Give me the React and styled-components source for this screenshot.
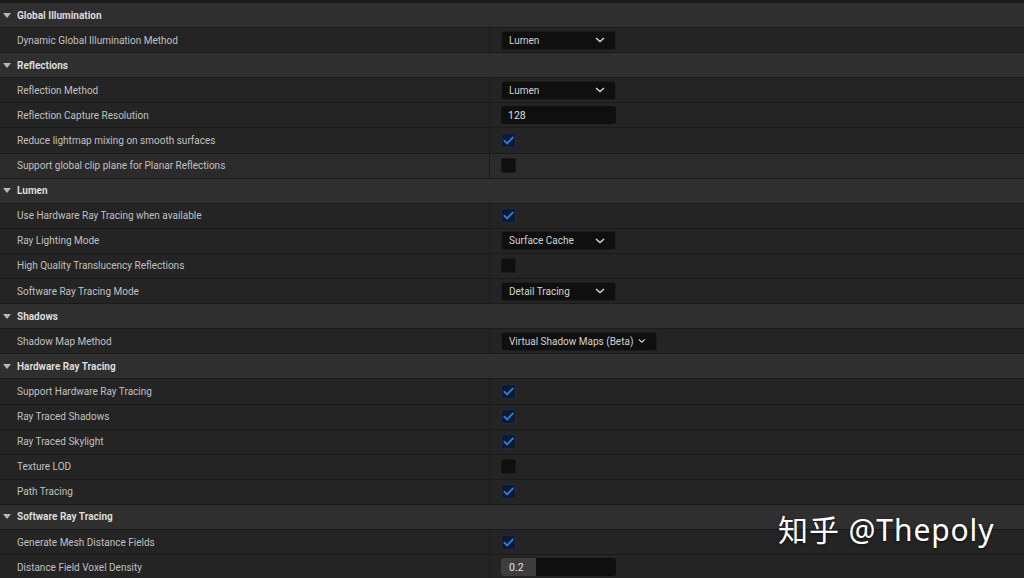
import React from "react";
import styled, { createGlobalStyle } from "styled-components";

const GlobalStyle = createGlobalStyle`
  html, body {
    margin: 0;
    padding: 0;
    background: #1a1a1a;
    overflow: hidden;
  }
  body {
    font-family: Roboto, "Noto Sans", "Liberation Sans", sans-serif;
  }
`;

const sections = [
  {
    title: "Global Illumination",
    rows: [{ label: "Dynamic Global Illumination Method", type: "select", value: "Lumen" }],
  },
  {
    title: "Reflections",
    rows: [
      { label: "Reflection Method", type: "select", value: "Lumen" },
      { label: "Reflection Capture Resolution", type: "text", value: "128" },
      { label: "Reduce lightmap mixing on smooth surfaces", type: "check", value: true },
      { label: "Support global clip plane for Planar Reflections", type: "check", value: false, hover: true },
    ],
  },
  {
    title: "Lumen",
    rows: [
      { label: "Use Hardware Ray Tracing when available", type: "check", value: true },
      { label: "Ray Lighting Mode", type: "select", value: "Surface Cache" },
      { label: "High Quality Translucency Reflections", type: "check", value: false },
      { label: "Software Ray Tracing Mode", type: "select", value: "Detail Tracing" },
    ],
  },
  {
    title: "Shadows",
    rows: [{ label: "Shadow Map Method", type: "select", value: "Virtual Shadow Maps (Beta)", wide: true }],
  },
  {
    title: "Hardware Ray Tracing",
    rows: [
      { label: "Support Hardware Ray Tracing", type: "check", value: true },
      { label: "Ray Traced Shadows", type: "check", value: true },
      { label: "Ray Traced Skylight", type: "check", value: true },
      { label: "Texture LOD", type: "check", value: false },
      { label: "Path Tracing", type: "check", value: true },
    ],
  },
  {
    title: "Software Ray Tracing",
    rows: [
      { label: "Generate Mesh Distance Fields", type: "check", value: true },
      { label: "Distance Field Voxel Density", type: "slider", value: "0.2", fill: 0.3 },
    ],
  },
];

const Panel = styled.div`
  position: relative;
  width: 1024px;
  height: 578px;
  padding-top: 3px;
  box-sizing: border-box;
  background: #1a1a1a;
  display: flex;
  flex-direction: column;
  gap: 1px;
  overflow: hidden;
`;

const Header = styled.div`
  height: 24.1px;
  background: #2f2f2f;
  display: flex;
  align-items: center;
  color: #dcdcdc;
  font-size: 10px;
  font-weight: 700;
  flex-shrink: 0;
`;

const Arrow = styled.span`
  width: 0;
  height: 0;
  margin: 0 6px 0 3px;
  border-left: 4px solid transparent;
  border-right: 4px solid transparent;
  border-top: 5px solid #b8b8b8;
`;

const Row = styled.div`
  height: 24.1px;
  background: ${(p) => (p.$hover ? "#2b2b2b" : "#242424")};
  display: grid;
  grid-template-columns: 489px 1px 1fr;
  flex-shrink: 0;
`;

const Label = styled.div`
  display: flex;
  align-items: center;
  padding-left: 17px;
  color: #c0c0c0;
  font-size: 10px;
`;

const Divider = styled.div`
  background: #1c1c1c;
`;

const Value = styled.div`
  display: flex;
  align-items: center;
  padding-left: 11px;
`;

const Select = styled.div`
  width: ${(p) => (p.$wide ? "156px" : "115px")};
  height: 19px;
  box-sizing: border-box;
  background: #0f0f0f;
  border: 1px solid #1c1c1c;
  border-radius: 3px;
  display: flex;
  align-items: center;
  justify-content: ${(p) => (p.$wide ? "flex-start" : "space-between")};
  gap: 5px;
  padding: 0 10px 0 7px;
  color: #d2d2d2;
  font-size: 10px;
  white-space: nowrap;
`;

const TextBox = styled.div`
  width: 115px;
  height: 18px;
  box-sizing: border-box;
  background: #0f0f0f;
  border-radius: 3px;
  display: flex;
  align-items: center;
  padding-left: 7px;
  color: #e0e0e0;
  font-size: 10.5px;
`;

const Slider = styled.div`
  width: 115px;
  height: 18px;
  box-sizing: border-box;
  background: #0f0f0f;
  border-radius: 3px;
  overflow: hidden;
  position: relative;
  display: flex;
  align-items: center;
  color: #e6e6e6;
  font-size: 10.5px;
`;

const SliderFill = styled.div`
  position: absolute;
  left: 0;
  top: 0;
  bottom: 0;
  background: #3d3d3d;
`;

const SliderText = styled.span`
  position: relative;
  padding-left: 8px;
`;

const Check = styled.div`
  width: 15px;
  height: 15px;
  box-sizing: border-box;
  border-radius: 2px;
  background: ${(p) => (p.$on ? "#0d1a30" : "#0f0f0f")};
  border: 1px solid ${(p) => (p.$on ? "#1a2c4a" : "#1a1a1a")};
  display: flex;
  align-items: center;
  justify-content: center;
`;

const Watermark = styled.div`
  position: absolute;
  left: 778px;
  top: 506px;
  color: #ffffff;
  font-size: 30px;
  font-family: "Noto Sans", "Noto Sans CJK SC", sans-serif;
  letter-spacing: 0.9px;
  text-shadow: 0 1px 3px rgba(0, 0, 0, 0.6);
  white-space: nowrap;
`;

const Chevron = () => (
  <svg width="10" height="6" viewBox="0 0 10 6">
    <path d="M1 1l4 3.6L9 1" fill="none" stroke="#d8d8d8" strokeWidth="1.4" />
  </svg>
);

const Tick = () => (
  <svg width="11" height="9" viewBox="0 0 11 9">
    <path d="M1.3 4.6l2.8 2.8L9.8 1.5" fill="none" stroke="#2f7de0" strokeWidth="1.8" strokeLinecap="round" />
  </svg>
);

const renderValue = (r) => {
  if (r.type === "select")
    return (
      <Select $wide={r.wide}>
        {r.value}
        <Chevron />
      </Select>
    );
  if (r.type === "text") return <TextBox>{r.value}</TextBox>;
  if (r.type === "slider")
    return (
      <Slider>
        <SliderFill style={{ width: `${r.fill * 100}%` }} />
        <SliderText>{r.value}</SliderText>
      </Slider>
    );
  return <Check $on={r.value}>{r.value && <Tick />}</Check>;
};

export default function App() {
  return (
    <>
      <GlobalStyle />
      <Panel>
        {sections.map((s) => (
          <React.Fragment key={s.title}>
            <Header>
              <Arrow />
              {s.title}
            </Header>
            {s.rows.map((r) => (
              <Row key={r.label} $hover={r.hover}>
                <Label>{r.label}</Label>
                <Divider />
                <Value>{renderValue(r)}</Value>
              </Row>
            ))}
          </React.Fragment>
        ))}
        <Watermark>知乎 @Thepoly</Watermark>
      </Panel>
    </>
  );
}
